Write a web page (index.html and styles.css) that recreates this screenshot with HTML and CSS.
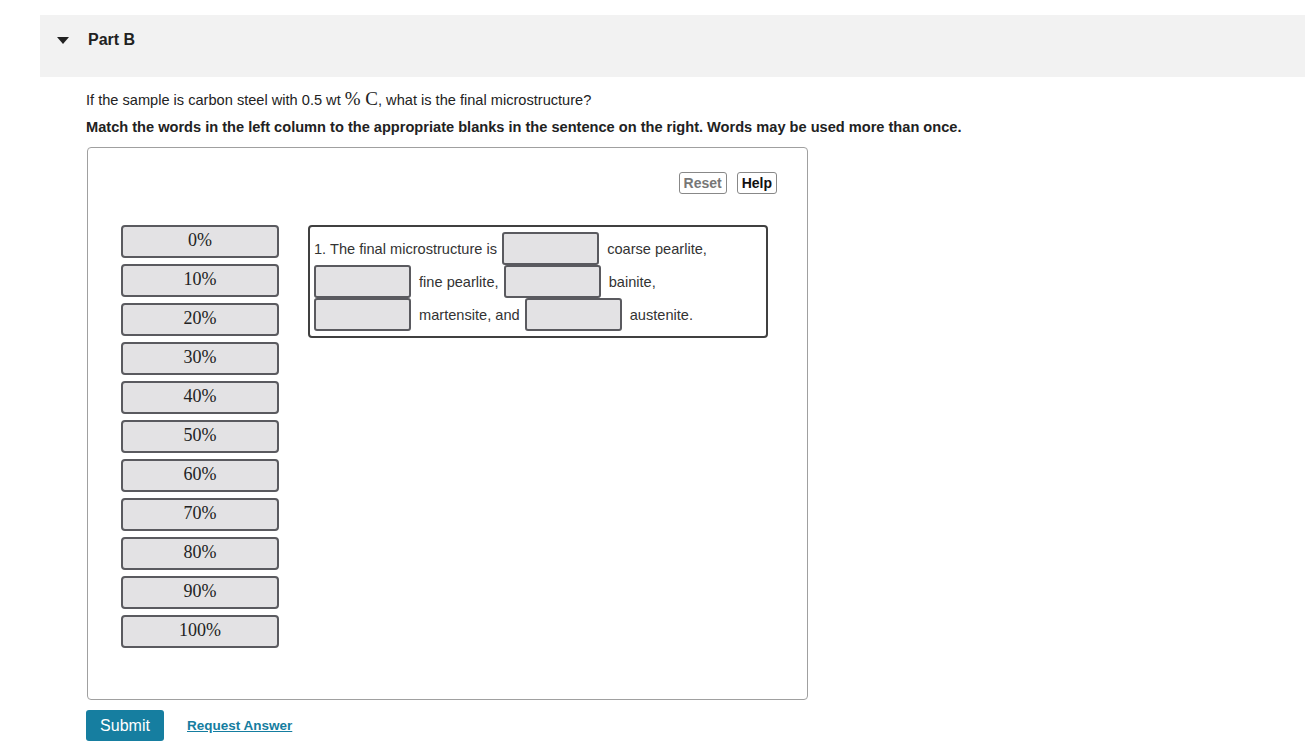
FILE: index.html
```html
<!DOCTYPE html>
<html lang="en">
<head>
    <meta charset="UTF-8">
    <title>Part B</title>
    <link rel="stylesheet" href="styles.css">
</head>
<body>

<div class="part-header">
    <span class="caret"></span>
    <h2>Part B</h2>
</div>

<div class="part-body">
    <p class="question">If the sample is carbon steel with 0.5 wt <span class="math">% C</span>, what is the final microstructure?</p>
    <p class="instructions">Match the words in the left column to the appropriate blanks in the sentence on the right. Words may be used more than once.</p>

    <div class="dnd-box">
        <div class="toolbar">
            <button class="tool-btn reset">Reset</button>
            <button class="tool-btn">Help</button>
        </div>
        <div class="dnd-main">
            <div class="tiles">
                <div class="tile">0%</div>
                <div class="tile">10%</div>
                <div class="tile">20%</div>
                <div class="tile">30%</div>
                <div class="tile">40%</div>
                <div class="tile">50%</div>
                <div class="tile">60%</div>
                <div class="tile">70%</div>
                <div class="tile">80%</div>
                <div class="tile">90%</div>
                <div class="tile">100%</div>
            </div>
            <div class="sentence">
                <div class="line">1. The final microstructure is <span class="blank"></span> coarse pearlite,</div>
                <div class="line"><span class="blank first"></span> fine pearlite, <span class="blank"></span> bainite,</div>
                <div class="line"><span class="blank first"></span> martensite, and <span class="blank"></span> austenite.</div>
            </div>
        </div>
    </div>

    <div class="actions">
        <button class="submit">Submit</button>
        <a href="#" class="request">Request Answer</a>
    </div>
</div>

</body>
</html>
```

FILE: styles.css
```css
body {
    margin: 0;
    font-family: 'Liberation Sans', Arial, sans-serif;
    color: #222;
    background: #fff;
}
.part-header {
    margin: 15px 3px 0 40px;
    height: 62px;
    background-color: #f2f2f2;
    display: flex;
    align-items: flex-start;
    padding-top: 15px;
    box-sizing: border-box;
}
.caret {
    width: 0;
    height: 0;
    border-left: 6px solid transparent;
    border-right: 6px solid transparent;
    border-top: 7px solid #222;
    margin: 7px 0 0 17px;
}
.part-header h2 {
    margin: 0 0 0 19px;
    font-size: 16px;
    line-height: 19px;
    font-weight: bold;
    color: #222;
}
.part-body {
    padding-left: 86px;
}
.question {
    margin: 13px 0 0;
    font-size: 14.6px;
    line-height: 18px;
}
.math {
    font-family: 'Liberation Serif', serif;
    font-size: 19px;
}
.instructions {
    margin: 10px 0 0;
    font-size: 14.6px;
    font-weight: bold;
    color: #222;
}
.dnd-box {
    margin-top: 12px;
    margin-left: 1px;
    width: 721px;
    height: 553px;
    border: 1px solid #a0a0a0;
    border-radius: 4px;
    box-sizing: border-box;
}
.toolbar {
    display: flex;
    justify-content: flex-end;
    gap: 10px;
    padding: 24px 30px 0 0;
}
.tool-btn {
    font-family: 'Liberation Sans', Arial, sans-serif;
    font-size: 14px;
    font-weight: bold;
    color: #111;
    background: #fff;
    border: 1px solid #888;
    border-radius: 3px;
    padding: 1px 4px;
    height: 22px;
    line-height: 18px;
}
.tool-btn.reset {
    color: #777;
}
.dnd-main {
    display: flex;
    gap: 29px;
    margin-top: 31px;
    padding-left: 33px;
}
.tiles {
    display: flex;
    flex-direction: column;
    gap: 6px;
}
.tile {
    width: 158px;
    height: 33px;
    box-sizing: border-box;
    border: 2px solid #5a5a5f;
    border-radius: 4px;
    background-color: #e3e2e4;
    font-family: 'Liberation Serif', serif;
    font-size: 18px;
    color: #222;
    text-align: center;
    line-height: 27px;
}
.sentence {
    width: 460px;
    height: 113px;
    box-sizing: border-box;
    border: 2px solid #404040;
    border-radius: 4px;
    padding: 5px 0 0 4px;
    font-size: 14.6px;
    color: #333;
}
.line {
    height: 33px;
    display: flex;
    align-items: center;
    white-space: pre;
}
.blank {
    display: inline-block;
    width: 97px;
    height: 33px;
    box-sizing: border-box;
    border: 2px solid #5a5a5f;
    border-radius: 3px;
    background-color: #e3e2e4;
    margin: 0 4px 0 1px;
}
.blank.first {
    margin-left: 0;
}
.actions {
    display: flex;
    align-items: center;
    gap: 23px;
    margin-top: 10px;
}
.submit {
    background-color: #167ea0;
    color: #fff;
    border: none;
    border-radius: 3px;
    font-family: 'Liberation Sans', Arial, sans-serif;
    font-size: 16px;
    width: 78px;
    height: 31px;
}
.request {
    color: #157da0;
    font-size: 13.5px;
    font-weight: bold;
    text-decoration: underline;
}
```
